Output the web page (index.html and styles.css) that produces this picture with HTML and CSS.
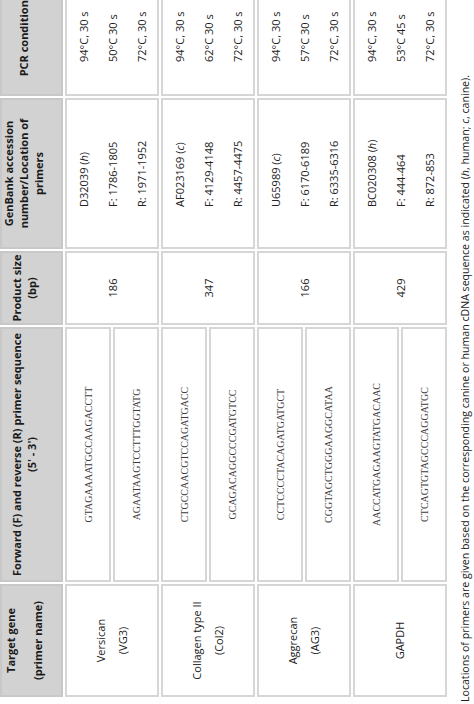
FILE: index.html
```html
<!DOCTYPE html>
<html>
<head>
<meta charset="utf-8">
<link rel="stylesheet" href="styles.css">
</head>
<body>
<div class="page">
<div class="grid">
  <div class="cell head"><div class="h1">Target gene</div><div class="h2">(primer name)</div></div>
  <div class="cell head">Forward (F) and reverse (R) primer sequence<br>(5' - 3')</div>
  <div class="cell head">Product size<br>(bp)</div>
  <div class="cell head">GenBank accession<br>number/Location of<br>primers</div>
  <div class="cell head">PCR conditions</div>

  <div class="cell gene"><div>Versican</div><div>(VG3)</div></div>
  <div class="cell seq">GTAGAAAATGCCAAGACCTT</div>
  <div class="cell size">186</div>
  <div class="cell acc"><div>D32039 (<i>h</i>)</div><div>F: 1786-1805</div><div>R: 1971-1952</div></div>
  <div class="cell pcr"><div>94°C, 30 s</div><div>50°C 30 s</div><div>72°C, 30 s</div></div>
  <div class="cell seq">AGAATAAGTCCTTTGGTATG</div>

  <div class="cell gene"><div>Collagen type II</div><div>(Col2)</div></div>
  <div class="cell seq">CTGCCAACGTCCAGATGACC</div>
  <div class="cell size">347</div>
  <div class="cell acc"><div>AF023169 (<i>c</i>)</div><div>F: 4129-4148</div><div>R: 4457-4475</div></div>
  <div class="cell pcr"><div>94°C, 30 s</div><div>62°C 30 s</div><div>72°C, 30 s</div></div>
  <div class="cell seq">GCAGACAGGCCCGATGTCC</div>

  <div class="cell gene"><div>Aggrecan</div><div>(AG3)</div></div>
  <div class="cell seq">CCTCCCCTACAGATGATGCT</div>
  <div class="cell size">166</div>
  <div class="cell acc"><div>U65989 (<i>c</i>)</div><div>F: 6170-6189</div><div>R: 6335-6316</div></div>
  <div class="cell pcr"><div>94°C, 30 s</div><div>57°C 30 s</div><div>72°C, 30 s</div></div>
  <div class="cell seq">CGGTAGCTGGGAAGGCATAA</div>

  <div class="cell gene"><div>GAPDH</div></div>
  <div class="cell seq">AACCATGAGAAGTATGACAAC</div>
  <div class="cell size">429</div>
  <div class="cell acc"><div>BC020308 (<i>h</i>)</div><div>F: 444-464</div><div>R: 872-853</div></div>
  <div class="cell pcr"><div>94°C, 30 s</div><div>53°C 45 s</div><div>72°C, 30 s</div></div>
  <div class="cell seq">CTCAGTGTAGCCCAGGATGC</div>
</div>
<p class="note">Locations of primers are given based on the corresponding canine or human cDNA sequence as indicated (<i>h</i>, human; <i>c</i>, canine).</p>
</div>
</body>
</html>
```
FILE: styles.css
```css
html, body {
  margin: 0;
  padding: 0;
}
body {
  width: 474px;
  height: 704px;
  overflow: hidden;
  background: #fff;
  font-family: "Open Sans", "Noto Sans", sans-serif;
  color: #222;
}
.page {
  width: 740px;
  height: 474px;
  box-sizing: border-box;
  padding-left: 7px;
  transform-origin: 0 0;
  transform: translate(0, 704px) rotate(-90deg);
}
.grid {
  display: grid;
  grid-template-columns: 113px 255px 74px 151px 121px;
  grid-template-rows: 63px repeat(8, 46px);
  gap: 2px;
  width: max-content;
}
.cell {
  box-sizing: border-box;
  border: 2px solid #d6d6d6;
  display: flex;
  flex-direction: column;
  justify-content: center;
  align-items: center;
  text-align: center;
  font-size: 11px;
  line-height: 15px;
  white-space: nowrap;
}
.head {
  background: #d2d2d2;
  border-color: #c8c8c8;
  font-weight: bold;
  color: #1a1a1a;
  padding-bottom: 16px;
}
.h2 {
  margin-top: 12px;
}
.gene,
.size,
.acc,
.pcr {
  grid-row: span 2;
}
.gene div {
  line-height: 22px;
}
.seq {
  font-family: "Liberation Serif", serif;
  font-size: 10px;
  color: #3a3a3a;
}
.acc,
.pcr {
  align-items: flex-start;
  text-align: left;
}
.acc {
  padding-left: 40px;
}
.pcr {
  padding-left: 32px;
}
.acc div,
.pcr div {
  line-height: 29px;
}
.note {
  margin: 11px 0 0 -5px;
  font-size: 10.6px;
  line-height: 14px;
  white-space: nowrap;
  color: #222;
}
```
